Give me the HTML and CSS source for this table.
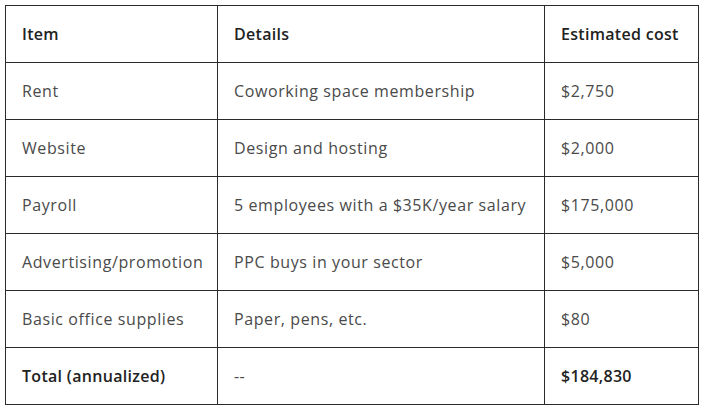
FILE: index.html
```html
<!DOCTYPE html>
<html>
<head>
<meta charset="utf-8">
<link rel="stylesheet" href="styles.css">
</head>
<body>
<div class="wrap">
<table class="cost">
  <colgroup>
    <col class="c1"><col class="c2"><col class="c3">
  </colgroup>
  <thead>
    <tr><th>Item</th><th>Details</th><th>Estimated cost</th></tr>
  </thead>
  <tbody>
    <tr><td>Rent</td><td>Coworking space membership</td><td>$2,750</td></tr>
    <tr><td>Website</td><td>Design and hosting</td><td>$2,000</td></tr>
    <tr><td>Payroll</td><td>5 employees with a $35K/year salary</td><td>$175,000</td></tr>
    <tr><td>Advertising/promotion</td><td>PPC buys in your sector</td><td>$5,000</td></tr>
    <tr><td>Basic office supplies</td><td>Paper, pens, etc.</td><td>$80</td></tr>
    <tr class="total"><td>Total (annualized)</td><td>--</td><td>$184,830</td></tr>
  </tbody>
</table>
</div>
</body>
</html>
```
FILE: styles.css
```css
html, body {
  margin: 0;
  padding: 0;
  background: #ffffff;
}
.wrap {
  padding: 5px 0 0 5px;
}
.cost {
  border-collapse: collapse;
  table-layout: fixed;
  width: 693px;
  font-family: "Open Sans", "Liberation Sans", sans-serif;
  font-size: 16px;
  letter-spacing: 0.6px;
  color: #4a4a4a;
}
.c1 { width: 212px; }
.c2 { width: 327px; }
.c3 { width: 154px; }
.cost th, .cost td {
  border: 1.5px solid #2a2a2a;
  height: 57px;
  padding: 0 0 0 16px;
  text-align: left;
  vertical-align: middle;
  white-space: nowrap;
  box-sizing: border-box;
}
.cost th {
  font-weight: 600;
  color: #222222;
  letter-spacing: 0.3px;
}
.cost .total td {
  font-weight: 600;
  color: #222222;
  letter-spacing: 0.3px;
}
.cost .total td:nth-child(2) {
  font-weight: 400;
  color: #4a4a4a;
}
```
